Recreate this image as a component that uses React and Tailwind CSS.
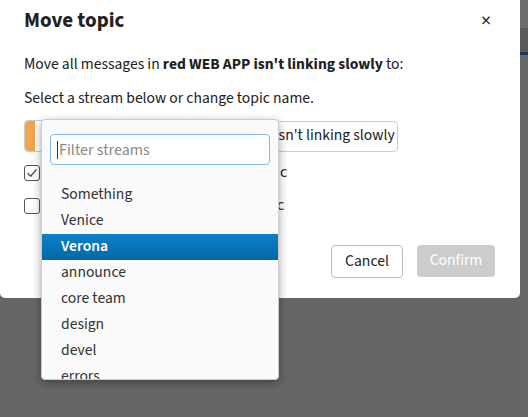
import React from "react";

const streams = ["Something", "Venice", "Verona", "announce", "core team", "design", "devel", "errors"];

function Check({ checked }) {
  return (
    <span className="flex h-[16px] w-[16px] shrink-0 items-center justify-center rounded-[3px] border border-[#555] bg-white">
      {checked && (
        <svg width="12" height="12" viewBox="0 0 12 12" fill="none">
          <path d="M2 6.5 L4.8 9.2 L10 2.8" stroke="#444" strokeWidth="1.3" strokeLinecap="round" strokeLinejoin="round" />
        </svg>
      )}
    </span>
  );
}

export default function App() {
  return (
    <div className="relative flex h-[417px] w-[528px] overflow-hidden bg-[#666] font-['Source_Sans_3','Lato',sans-serif] text-[#222]">
      <div className="flex h-[298px] w-[520px] shrink-0 flex-col rounded-b-[5px] bg-white px-6">
        <div className="flex h-[42px] items-center justify-between">
          <h1 className="text-[21px] font-bold text-[#222]">Move topic</h1>
          <span className="mr-[5px] text-[20px] leading-none text-[#222]">×</span>
        </div>
        <p className="mt-[12px] text-[15.6px] leading-[20px]">
          Move all messages in <b>red WEB APP isn't linking slowly</b> to:
        </p>
        <p className="mt-[14px] text-[15.6px] leading-[20px]">Select a stream below or change topic name.</p>
        <div className="mt-[12px] flex h-[32px] items-center">
          <div className="flex h-[32px] w-[151px] items-center rounded-[4px] border border-[#ccc]">
            <span className="h-full w-[10px] rounded-l-[4px] bg-[#f2a54e]" />
          </div>
          <div className="ml-[6px] flex h-[31px] w-[217px] items-center overflow-hidden rounded-[4px] border border-[#ccc] px-[6px] text-[15.6px] whitespace-nowrap">
            red WEB APP isn't linking slowly
          </div>
        </div>
        <label className="mt-[13px] flex h-[16px] items-center gap-[9px] text-[15.6px]">
          <Check checked />
          <span className="w-[238px] text-right whitespace-nowrap">Send notification to new topic</span>
        </label>
        <label className="mt-[17px] flex h-[16px] items-center gap-[9px] text-[15.6px]">
          <Check />
          <span className="w-[235px] text-right whitespace-nowrap">Send notification to old topic</span>
        </label>
        <div className="mt-[31px] flex justify-end gap-[14px] pr-[1px]">
          <button className="h-[33px] w-[72px] rounded-[4px] border border-[#bbb] bg-white text-[15.6px] text-[#222]">Cancel</button>
          <button className="h-[32px] w-[78px] rounded-[4px] bg-[#ccc] text-[15.6px] text-white">Confirm</button>
        </div>
      </div>
      <div className="flex w-[8px] flex-col">
        <div className="h-[28px] bg-[#6b6b6b]" />
        <div className="h-[24px] bg-[#5a5a5a]" />
        <div className="h-[3px] bg-[#1e3658]" />
        <div className="flex-1 bg-[#686868]" />
      </div>

      <div className="absolute left-[41px] top-[119px] flex h-[261px] w-[238px] flex-col overflow-hidden rounded-[4px] border border-[#ccc] bg-[#fafafa] shadow-[0_3px_10px_rgba(0,0,0,0.35)]">
        <div className="px-[8px] pt-[14px] pb-[17px]">
          <div className="flex h-[31px] items-center rounded-[4px] border border-[#80b8ea] bg-white px-[6px] text-[16px] text-[#888]">
            <span className="mr-[1px] h-[18px] w-[1px] bg-[#333]" />
            Filter streams
          </div>
        </div>
        <ul className="flex flex-col">
          {streams.map((s) =>
            s === "Verona" ? (
              <li key={s} className="flex h-[26px] items-center bg-gradient-to-b from-[#0a81c8] to-[#0467a6] px-[19px] text-[15.6px] font-semibold text-white">
                {s}
              </li>
            ) : (
              <li key={s} className="flex h-[26px] items-center px-[19px] text-[15.6px] text-[#333]">
                {s}
              </li>
            )
          )}
        </ul>
      </div>
    </div>
  );
}
